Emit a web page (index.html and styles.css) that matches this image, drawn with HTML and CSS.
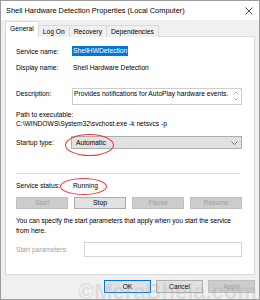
FILE: index.html
```html
<!DOCTYPE html>
<html>
<head>
<meta charset="utf-8">
<link rel="stylesheet" href="styles.css">
</head>
<body>
<div class="window">
  <div class="titlebar">
    <span class="title">Shell Hardware Detection Properties (Local Computer)</span>
    <svg class="close" width="8" height="8" viewBox="0 0 8 8"><path d="M0.5 0.5L7.5 7.5M7.5 0.5L0.5 7.5" stroke="#222" stroke-width="0.8" fill="none"/></svg>
  </div>
  <div class="body">
    <div class="tabs">
      <div class="tab active">General</div>
      <div class="tab">Log On</div>
      <div class="tab">Recovery</div>
      <div class="tab">Dependencies</div>
    </div>
    <div class="panel">
      <div class="row r-name">
        <span class="label">Service name:</span>
        <span class="sel">ShellHWDetection</span>
      </div>
      <div class="row r-display">
        <span class="label">Display name:</span>
        <span class="value">Shell Hardware Detection</span>
      </div>
      <div class="row r-desc">
        <span class="label">Description:</span>
        <div class="descbox">
          <span class="desctext">Provides notifications for AutoPlay hardware events.</span>
          <div class="scroll">
            <svg width="6" height="4" viewBox="0 0 6 4"><path d="M0.5 3.5L3 1L5.5 3.5" stroke="#a0a0a0" stroke-width="0.8" fill="none"/></svg>
            <svg width="6" height="4" viewBox="0 0 6 4"><path d="M0.5 0.5L3 3L5.5 0.5" stroke="#a0a0a0" stroke-width="0.8" fill="none"/></svg>
          </div>
        </div>
      </div>
      <div class="path">
        <div>Path to executable:</div>
        <div>C:\WINDOWS\System32\svchost.exe -k netsvcs -p</div>
      </div>
      <div class="row r-startup">
        <span class="label">Startup type:</span>
        <div class="select">
          <span>Automatic</span>
          <svg width="7" height="4" viewBox="0 0 7 4"><path d="M0.5 0.5L3.5 3.5L6.5 0.5" stroke="#555" stroke-width="0.8" fill="none"/></svg>
        </div>
      </div>
      <div class="sep"></div>
      <div class="row r-status">
        <span class="label">Service status:</span>
        <span class="value">Running</span>
      </div>
      <div class="svcbtns">
        <button class="btn disabled">Start</button>
        <button class="btn">Stop</button>
        <button class="btn disabled">Pause</button>
        <button class="btn disabled">Resume</button>
      </div>
      <p class="hint">You can specify the start parameters that apply when you start the service<br>from here.</p>
      <div class="row r-params">
        <span class="label plabel">Start parameters:</span>
        <div class="input"></div>
      </div>
    </div>
    <div class="actions">
      <button class="btn abtn primary">OK</button>
      <button class="btn abtn">Cancel</button>
      <button class="btn abtn disabled">Apply</button>
    </div>
  </div>
  <div class="mark">©MeraBheja.com</div>
  <div class="ellipse e-auto"></div>
  <div class="ellipse e-run"></div>
</div>
</body>
</html>
```
FILE: styles.css
```css
html, body {
  margin: 0;
  padding: 0;
}
body {
  width: 260px;
  height: 300px;
  overflow: hidden;
  font-family: "Liberation Sans", Arial, sans-serif;
  font-size: 6.7px;
  color: #000;
}
.window {
  position: relative;
  width: 260px;
  height: 300px;
  box-sizing: border-box;
  border: 1px solid #9c9c9c;
  background: #f0f0f0;
  overflow: hidden;
}
.titlebar {
  height: 19px;
  background: #fff;
  display: flex;
  align-items: center;
  padding: 0 5px 0 5px;
}
.title {
  font-size: 7.4px;
}
.close {
  margin-left: auto;
  margin-right: 1px;
}
.body {
  padding: 2px 4px 0 4px;
}
.tabs {
  display: flex;
  align-items: flex-end;
  height: 15px;
  margin-bottom: -1px;
  position: relative;
  z-index: 1;
}
.tab {
  height: 12px;
  box-sizing: border-box;
  border: 1px solid #d9d9d9;
  border-bottom: none;
  padding: 0 4px;
  line-height: 12px;
  background: #f0f0f0;
  margin-left: -1px;
}
.tab:first-child {
  margin-left: 0;
}
.tab.active {
  height: 16px;
  background: #fff;
  line-height: 14px;
  padding: 0 4px;
}
.panel {
  background: #fff;
  border: 1px solid #d9d9d9;
  height: 239px;
  box-sizing: border-box;
  padding: 0 12px 0 10px;
}
.row {
  display: flex;
  align-items: center;
}
.label {
  width: 56px;
  flex: none;
}
.r-name {
  margin-top: 9px;
  height: 10px;
}
.sel {
  background: #0078d7;
  color: #fff;
  padding: 1px 1px;
  line-height: 8px;
}
.r-display {
  margin-top: 6px;
  height: 10px;
}
.value {
  padding-left: 1px;
}
.r-desc {
  margin-top: 16px;
  align-items: flex-start;
}
.r-desc .label {
  padding-top: 2px;
}
.descbox {
  flex: 1;
  height: 17px;
  box-sizing: border-box;
  border: 1px solid #cdcdcd;
  display: flex;
  padding-left: 1px;
}
.desctext {
  flex: 1;
  padding-top: 1px;
  line-height: 8px;
  white-space: nowrap;
}
.scroll {
  width: 10px;
  display: flex;
  flex-direction: column;
  justify-content: space-between;
  align-items: center;
  padding: 2px 0 3px;
}
.path {
  margin-top: 5px;
  line-height: 9px;
}
.r-startup {
  margin-top: 8px;
}
.r-startup .label {
  width: 55px;
}
.select {
  flex: 1;
  height: 13px;
  box-sizing: border-box;
  background: #e1e1e1;
  border: 1px solid #adadad;
  display: flex;
  align-items: center;
  justify-content: space-between;
  padding: 0 3px 0 4px;
}
.sep {
  margin-top: 24px;
  height: 1px;
  background: #dcdcdc;
  margin-right: 2px;
}
.r-status {
  margin-top: 6px;
  height: 10px;
}
.svcbtns {
  margin-top: 7px;
  display: grid;
  grid-template-columns: repeat(4, 1fr);
  gap: 6px;
}
.btn {
  font-family: inherit;
  font-size: 6.7px;
  height: 12px;
  box-sizing: border-box;
  background: #e1e1e1;
  border: 1px solid #adadad;
  padding: 0;
  margin: 0;
  color: #000;
  line-height: 10px;
}
.btn.disabled {
  background: #cccccc;
  border-color: #bfbfbf;
  color: #a0a0a0;
}
.hint {
  margin: 7px 0 0 0;
  line-height: 10px;
  white-space: nowrap;
  letter-spacing: -0.05px;
}
.r-params {
  margin-top: 6px;
}
.plabel {
  width: 68px;
  color: #a0a0a0;
}
.input {
  flex: 1;
  height: 15px;
  box-sizing: border-box;
  border: 1px solid #d4d4d4;
}
.actions {
  display: flex;
  justify-content: flex-end;
  gap: 5px;
  margin-top: 5px;
  padding-right: 0;
}
.abtn {
  width: 47px;
  height: 13px;
}
.abtn.primary {
  border: 1.5px solid #0078d7;
}
.mark {
  position: absolute;
  left: 77px;
  top: 278px;
  font-family: "Liberation Sans", Arial, sans-serif;
  font-weight: bold;
  font-size: 22px;
  color: rgba(170, 170, 170, 0.28);
  white-space: nowrap;
  pointer-events: none;
}
.ellipse {
  position: absolute;
  border: 1.5px solid #e23b3f;
  border-radius: 50%;
  box-sizing: border-box;
}
.e-auto {
  left: 64px;
  top: 133px;
  width: 49px;
  height: 22px;
}
.e-run {
  left: 59px;
  top: 177px;
  width: 47px;
  height: 17px;
}
```
